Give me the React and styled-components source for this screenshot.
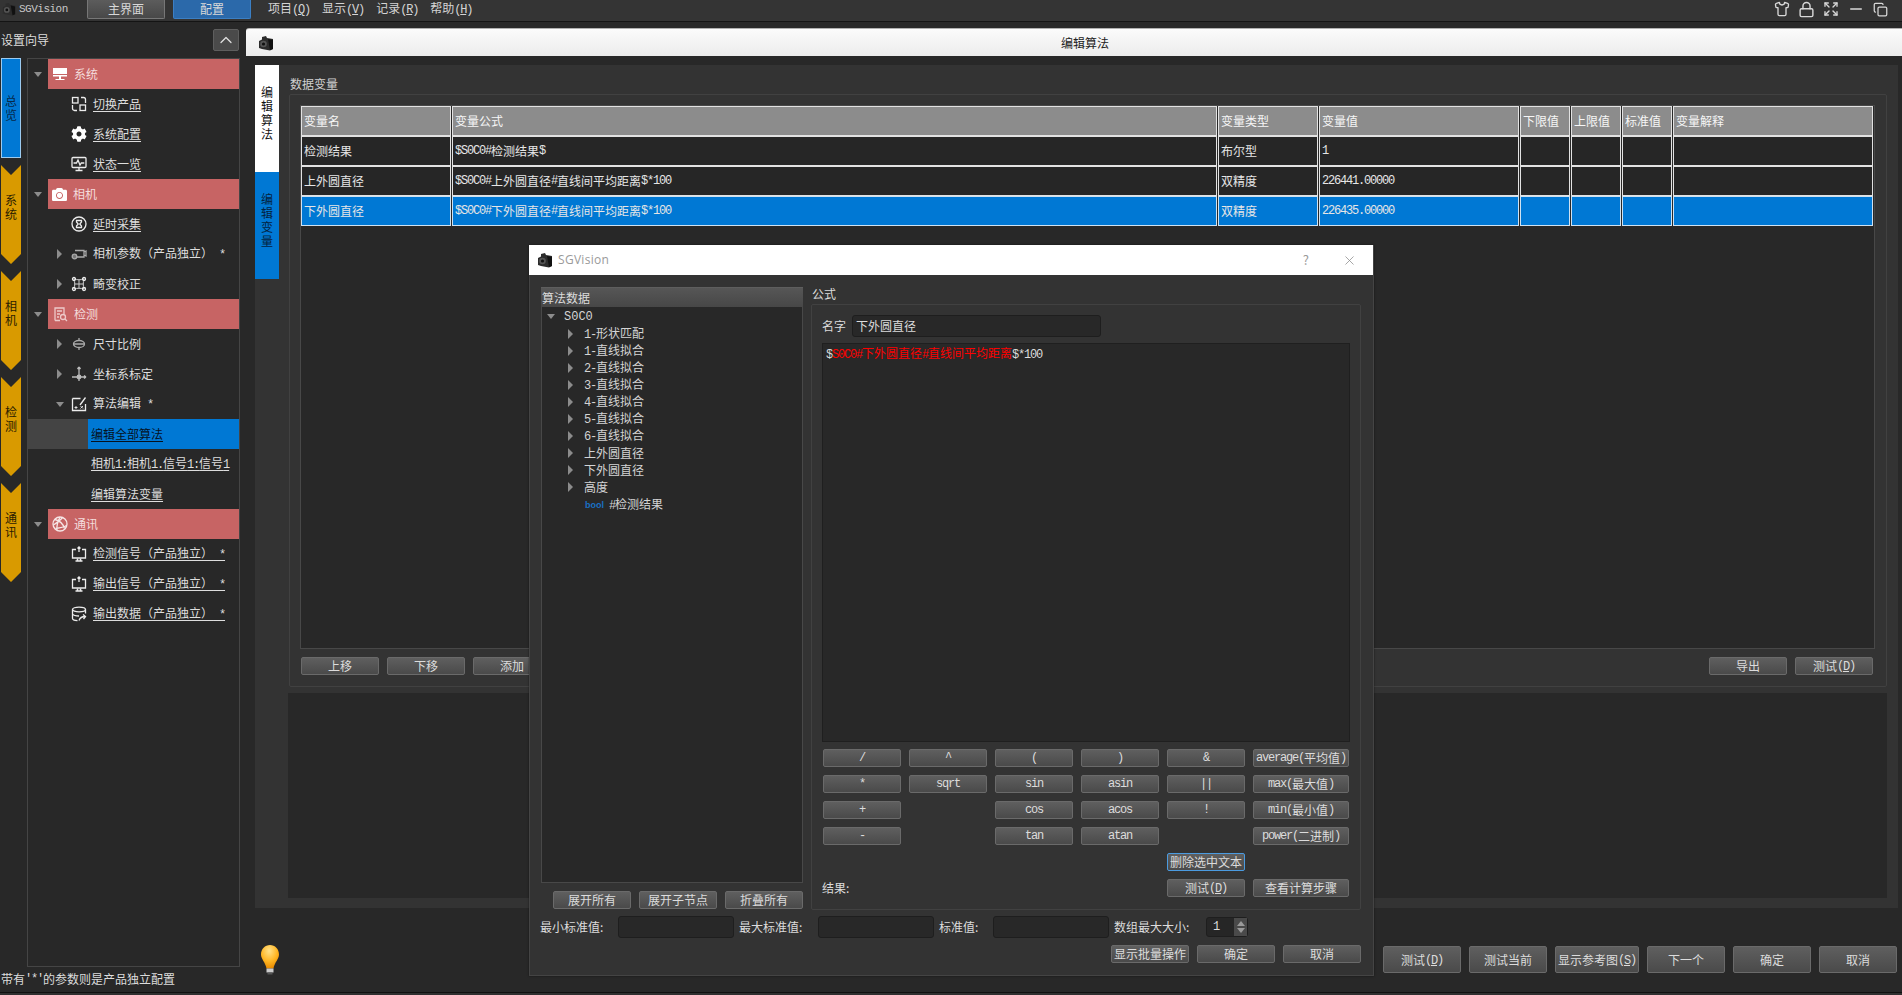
import React from "react";
import styled, { createGlobalStyle } from "styled-components";
import { FaCog, FaCamera } from "react-icons/fa";
import { Shirt, Lock, Expand, Minus, Copy, X, ChevronUp } from "lucide-react";

const GlobalStyle = createGlobalStyle`
  html, body {
    margin: 0;
    padding: 0;
    background: #282828;
  }
  * {
    box-sizing: border-box;
  }
`;

const CJK = `"Noto Sans CJK SC", sans-serif`;

const Page = styled.div`
  position: relative;
  width: 1902px;
  height: 995px;
  overflow: hidden;
  display: flex;
  flex-direction: column;
  background: #282828;
  color: #dcdcdc;
  font-family: ${CJK};
  font-size: 12px;
  line-height: 14px;
`;

const Latin = styled.span`
  font-family: "Liberation Mono", monospace;
  font-size: 12px;
  letter-spacing: -1.2px;
`;

// splits a label so ascii gets the half width face
const Txt = ({ children }) =>
  String(children)
    .split(/([\x21-\x7e ]+)/)
    .map((part, i) =>
      i % 2 ? <Latin key={i}>{part}</Latin> : part
    );

const Key = ({ label, k }) => (
  <>
    {label}
    <Latin>(</Latin>
    <u>
      <Latin>{k}</Latin>
    </u>
    <Latin>)</Latin>
  </>
);

/* top bar */
const TopBar = styled.div`
  flex: none;
  height: 22px;
  display: flex;
  background: #343434;
  border-bottom: 1px solid #141414;
`;

const Brand = styled.div`
  width: 87px;
  display: flex;
  align-items: center;
  gap: 3px;
  padding: 0 0 3px 2px;
`;

const BrandName = styled.span`
  font-family: "Liberation Mono", monospace;
  font-size: 11px;
  letter-spacing: -0.5px;
  color: #c8c8c8;
`;

const ModeTab = styled.div`
  width: 78px;
  height: 19px;
  margin-right: 8px;
  display: flex;
  align-items: center;
  justify-content: center;
  border: 1px solid ${(p) => (p.$active ? "#3b7fc4" : "#777")};
  border-top: 0;
  border-radius: 0 0 2px 2px;
  background: ${(p) =>
    p.$active ? "#2b69aa" : "linear-gradient(#5c5c5c, #484848)"};
  color: #d8d8d8;
`;

const MenuList = styled.div`
  display: flex;
  gap: 12px;
  margin-left: 9px;
  height: 18px;
  align-items: center;
  color: #d4d4d4;
`;

const WindowButtons = styled.div`
  margin-left: auto;
  margin-right: -12px;
  display: flex;
  align-items: center;
  gap: 8px;
  height: 18px;
  color: #d8d8d8;
`;

const CloseIcon = styled(X)`
  margin-left: 4px;
`;

/* body */
const Body = styled.div`
  flex: none;
  height: 970px;
  display: flex;
`;

const Sidebar = styled.div`
  flex: none;
  width: 246px;
  display: flex;
  flex-direction: column;
`;

const SideHead = styled.div`
  height: 29px;
  margin-top: 7px;
  padding: 0 7px 0 1px;
  display: flex;
  align-items: flex-start;
  justify-content: space-between;
`;

const SideTitle = styled.span`
  margin-top: 4px;
`;

const CollapseButton = styled.div`
  width: 26px;
  height: 22px;
  display: flex;
  align-items: center;
  justify-content: center;
  background: #4a4a4a;
  border: 1px solid #5e5e5e;
  border-radius: 2px;
  color: #e0e0e0;
`;

const SideColumns = styled.div`
  height: 909px;
  display: flex;
  padding-left: 1px;
  gap: 6px;
`;

const Rail = styled.div`
  width: 20px;
  display: flex;
  flex-direction: column;
  gap: 7px;
`;

const RailOverview = styled.div`
  height: 100px;
  display: flex;
  align-items: center;
  justify-content: center;
  text-align: center;
  background: #0078d4;
  border: 1px solid #9ccbf0;
  color: #06294a;
`;

const RailChevron = styled.div`
  height: 99px;
  padding-top: 28px;
  text-align: center;
  background: #d99a00;
  color: #2c2000;
  clip-path: polygon(
    0 0,
    50% 10px,
    100% 0,
    100% calc(100% - 10px),
    50% 100%,
    0 calc(100% - 10px)
  );
`;

const Tree = styled.div`
  width: 213px;
  border: 1px solid #454545;
  background: #282828;
`;

const CategoryRow = styled.div`
  height: 30px;
  display: flex;
  align-items: center;
`;

const ArrowSlot = styled.div`
  flex: none;
  width: ${(p) => p.$w}px;
  display: flex;
  justify-content: center;
`;

const CategoryBar = styled.div`
  flex: 1;
  height: 30px;
  display: flex;
  align-items: center;
  gap: 6px;
  padding-left: 4px;
  background: #c76464;
  color: #f4dcdc;
`;

const ItemRow = styled.div`
  height: 30px;
  display: flex;
  align-items: center;
  padding-left: 20px;
`;

const ItemLabel = styled.span`
  margin-left: 6px;
  white-space: pre;
  color: #dedede;
  text-decoration: ${(p) => (p.$link ? "underline" : "none")};
  text-underline-offset: 2px;
`;

const LeafRow = styled.div`
  height: 30px;
  display: flex;
  align-items: center;
  padding-left: ${(p) => (p.$selected ? 0 : 63)}px;
  background: ${(p) => (p.$selected ? "#444" : "transparent")};
`;

const LeafFill = styled.div`
  margin-left: 60px;
  flex: 1;
  height: 30px;
  display: flex;
  align-items: center;
  padding-left: 3px;
  background: #0078d4;
`;

const LeafLink = styled.span`
  text-decoration: underline;
  text-underline-offset: 2px;
  color: ${(p) => (p.$selected ? "#06121f" : "#dedede")};
`;

const Triangle = styled.span`
  display: block;
  width: 0;
  height: 0;
  border-style: solid;
  ${(p) =>
    p.$open
      ? `border-width: 5px 4.5px 0 4.5px; border-color: #8c8c8c transparent transparent transparent;`
      : `border-width: 5px 0 5px 5px; border-color: transparent transparent transparent #8c8c8c;`}
`;

const IconBox = styled.svg`
  flex: none;
  width: 16px;
  height: 16px;
  fill: none;
  stroke: currentColor;
  stroke-width: 1.3;
  color: #ececec;
`;

const StatusLine = styled.div`
  margin-top: 1px;
  padding-left: 1px;
  height: 22px;
  display: flex;
  align-items: center;
`;

const Main = styled.div`
  flex: 1;
  display: flex;
  flex-direction: column;
  padding-top: 6px;
`;

const PageHeader = styled.div`
  height: 28px;
  display: flex;
  align-items: center;
  padding-left: 12px;
  background: linear-gradient(#fbfbfb, #ececec);
  border-top: 1px solid #b0b0b0;
  border-radius: 3px 0 0 0;
  color: #222;
`;

const PageTitle = styled.div`
  flex: 1;
  text-align: center;
  padding-right: 6px;
`;

const Panel = styled.div`
  height: 843px;
  margin: 9px 4px 0 9px;
  display: flex;
  background: #333;
`;

const SideTabs = styled.div`
  flex: none;
  width: 24px;
  display: flex;
  flex-direction: column;
`;

const SideTab = styled.div`
  height: 107px;
  padding-top: 20px;
  text-align: center;
  background: ${(p) => (p.$active ? "#fff" : "#0078d4")};
  color: ${(p) => (p.$active ? "#111" : "#04233f")};
`;

const PanelContent = styled.div`
  flex: 1;
  min-width: 0;
  padding: 13px 11px 10px 10px;
  display: flex;
  flex-direction: column;
`;

const GroupLabel = styled.div`
  height: 16px;
  margin-top: -1px;
  padding-left: 1px;
  margin-bottom: 1px;
  color: #d0d0d0;
`;

const GroupBox = styled.div`
  height: 593px;
  padding: 10px 11px 0 10px;
  border: 1px solid #414141;
  border-radius: 2px;
`;

const TableWrap = styled.div`
  height: 544px;
  border: 1px solid #484848;
  background: #282828;
`;

const TableRow = styled.div`
  display: grid;
  grid-template-columns: 150px 765px 100px 200px 50px 50px 50px 200px;
  column-gap: 1px;
`;

const Cell = styled.div`
  height: 30px;
  display: flex;
  align-items: center;
  padding-left: 2px;
  white-space: nowrap;
  overflow: hidden;
  border: 1px solid ${(p) => (p.$selected ? "#cfe2f2" : "#e2e2e2")};
  background: ${(p) =>
    p.$head ? "#8c8c8c" : p.$selected ? "#0078d4" : "#262626"};
  color: ${(p) => (p.$head ? "#f6f6f6" : "#e6e6e6")};
`;

const ButtonRow = styled.div`
  margin-top: 8px;
  padding: 0 2px 0 1px;
  display: flex;
  justify-content: space-between;
`;

const ButtonGroup = styled.div`
  display: flex;
  gap: 8px;
`;

const Btn = styled.div`
  flex: none;
  width: ${(p) => p.$w || 78}px;
  height: ${(p) => p.$h || 18}px;
  display: flex;
  align-items: center;
  justify-content: center;
  white-space: nowrap;
  border: 1px solid ${(p) => (p.$focus ? "#4b9be0" : "#6a6a6a")};
  border-radius: 2px;
  background: linear-gradient(#5f5f5f, #4a4a4a);
  color: #dcdcdc;
`;

const LowerPane = styled.div`
  flex: 1;
  margin-top: 6px;
  margin-left: -1px;
  background: #282828;
`;

const Footer = styled.div`
  margin-top: 37px;
  padding: 0 5px 0 14px;
  display: flex;
  justify-content: space-between;
`;

const FooterButtons = styled.div`
  display: flex;
  gap: 8px;
  padding-top: 1px;
`;

const BulbArt = styled.svg`
  width: 20px;
  height: 30px;
`;

const BottomStrip = styled.div`
  flex: 1;
  border-top: 1px solid #111;
  background: #303030;
`;

/* dialog */
const Dialog = styled.div`
  position: absolute;
  left: 529px;
  top: 245px;
  width: 845px;
  height: 731px;
  display: flex;
  flex-direction: column;
  background: #333;
  border: 1px solid #444;
  border-top: 0;
  box-shadow: 0 0 2px rgba(0, 0, 0, 0.5);
`;

const DialogTitle = styled.div`
  flex: none;
  height: 30px;
  margin: 0 0 0 -1px;
  display: flex;
  align-items: center;
  padding: 0 16px 0 8px;
  background: #fff;
`;

const DialogName = styled.span`
  margin-left: 5px;
  font-family: "Open Sans", sans-serif;
  font-size: 12px;
  letter-spacing: 0.3px;
  color: #9a9a9a;
`;

const HelpMark = styled.span`
  margin-left: auto;
  margin-right: 33px;
  font-size: 13px;
  color: #9a9a9a;
`;

const DialogBody = styled.div`
  flex: 1;
  padding: 12px 12px 0 11px;
  display: flex;
  flex-direction: column;
`;

const DialogMain = styled.div`
  height: 623px;
  display: flex;
  gap: 8px;
`;

const DataColumn = styled.div`
  width: 262px;
  display: flex;
  flex-direction: column;
`;

const DataHead = styled.div`
  height: 20px;
  display: flex;
  align-items: center;
  padding-left: 1px;
  background: linear-gradient(#565656, #474747);
  border-top: 1px solid #5e5e5e;
`;

const DataTree = styled.div`
  height: 576px;
  padding-top: 1px;
  border: 1px solid #484848;
  border-top: 0;
  background: #282828;
`;

const DataNode = styled.div`
  height: 17px;
  display: flex;
  align-items: center;
  padding-left: ${(p) => p.$indent}px;
  gap: ${(p) => p.$gap}px;
  color: #d4d4d4;
`;

const LeafNode = styled(DataNode)`
  margin-top: 1px;
`;

const TypeTag = styled.span`
  font-family: "Liberation Sans Narrow", "Liberation Sans", sans-serif;
  font-size: 9px;
  font-weight: 700;
  color: #1a70c4;
`;

const RootName = styled.span`
  font-family: "Liberation Mono", monospace;
  font-size: 12px;
`;

const DataButtons = styled.div`
  margin-top: 8px;
  display: flex;
  justify-content: flex-end;
  gap: 8px;
`;

const FormulaColumn = styled.div`
  width: 550px;
  display: flex;
  flex-direction: column;
`;

const FormulaLabel = styled.div`
  height: 17px;
  padding-left: 1px;
`;

const FormulaBox = styled.div`
  height: 606px;
  padding: 10px;
  border: 1px solid #414141;
  border-radius: 2px;
`;

const NameRow = styled.div`
  height: 22px;
  display: flex;
  align-items: center;
  gap: 6px;
`;

const Field = styled.div`
  flex: none;
  width: ${(p) => p.$w}px;
  height: 22px;
  display: flex;
  align-items: center;
  padding-left: 3px;
  background: #282828;
  border: 1px solid #1e1e1e;
  border-radius: 3px;
`;

const FormulaArea = styled.div`
  width: 528px;
  height: 399px;
  margin-top: 6px;
  padding: 2px 3px;
  background: #282828;
  border: 1px solid #1f1f1f;
  white-space: pre;
`;

const RedText = styled.span`
  color: #ff0000;
`;

const CalcGrid = styled.div`
  margin: 7px 0 0 1px;
  display: grid;
  grid-template-columns: repeat(5, 78px) 96px;
  grid-auto-rows: 18px;
  gap: 8px;
`;

const ResultLabel = styled.div`
  grid-column: span 4;
  margin-left: -1px;
  display: flex;
  align-items: center;
`;

const FieldsRow = styled.div`
  margin: 6px 0 0 -1px;
  height: 22px;
  display: flex;
  align-items: center;
`;

const FieldLabel = styled.span`
  flex: none;
  width: ${(p) => p.$w}px;
  margin-left: ${(p) => p.$ml || 0}px;
`;

const Spinner = styled.div`
  width: 42px;
  height: 20px;
  display: flex;
  justify-content: space-between;
  padding-left: 6px;
  align-items: center;
  background: #262626;
  border: 1px solid #1e1e1e;
  border-radius: 3px;
`;

const SpinArrows = styled.div`
  width: 13px;
  height: 18px;
  display: flex;
  flex-direction: column;
  align-items: center;
  justify-content: center;
  gap: 2px;
  background: #4a4a4a;
`;

const SpinArrow = styled.span`
  width: 0;
  height: 0;
  border-style: solid;
  border-width: ${(p) => (p.$up ? "0 4px 5px 4px" : "5px 4px 0 4px")};
  border-color: ${(p) =>
    p.$up
      ? "transparent transparent #9a9a9a transparent"
      : "#9a9a9a transparent transparent transparent"};
`;

const DialogActions = styled.div`
  margin-top: 7px;
  display: flex;
  justify-content: flex-end;
  gap: 8px;
`;

/* drawings */
const Ico = ({ children }) => <IconBox viewBox="0 0 16 16">{children}</IconBox>;

const icons = {
  monitorFill: (
    <g fill="#fff" stroke="none">
      <path d="M1 2h14v6H1zM1 9h14v1.5H1zM7 10.5h2V13H7zM3.5 13h9v1h-9z" />
    </g>
  ),
  swap: (
    <>
      <rect x="1.5" y="1.5" width="5.5" height="5.5" />
      <rect x="9" y="9" width="5.5" height="5.5" />
      <path d="M10 1.5h2.5a2 2 0 0 1 2 2V7M6 14.5H3.5a2 2 0 0 1-2-2V9" />
    </>
  ),
  status: (
    <>
      <rect x="1" y="1.5" width="14" height="10" rx="1" />
      <path d="M2.5 7h3l1.5-3 2 5 1.3-2h3M8 11.5V14M4.5 14.5h7" />
    </>
  ),
  timer: (
    <>
      <circle cx="8" cy="8" r="7" />
      <path d="M5.5 4.5h5v1.5L8.8 8l1.7 2v1.5h-5V10l1.7-2-1.7-2z" />
    </>
  ),
  camParam: (
    <>
      <path d="M4 4.5h9v6.5H6M13 6l2-1v5l-2-1" stroke="#aaa" />
      <circle cx="3.5" cy="10.5" r="2.3" fill="#777" stroke="#aaa" />
    </>
  ),
  distort: (
    <>
      <path d="M3 3c3 1 7 1 10 0M3 13c3-1 7-1 10 0M3 3c1 3 1 7 0 10M13 3c-1 3-1 7 0 10M8 3.5v9M3.5 8h9" stroke="#ccc" strokeWidth="1" />
      <circle cx="3" cy="3" r="1.5" />
      <circle cx="13" cy="3" r="1.5" />
      <circle cx="3" cy="13" r="1.5" />
      <circle cx="13" cy="13" r="1.5" />
    </>
  ),
  doc: (
    <>
      <path d="M3 14.5V2h9v6M3 14.5h5M5 5h5M5 8h3M5 11h2" stroke="#eecaca" />
      <circle cx="11" cy="11" r="2.5" stroke="#eecaca" />
      <path d="M13 13l2 2" stroke="#eecaca" />
    </>
  ),
  scale: (
    <>
      <ellipse cx="8" cy="8" rx="5.500" ry="3.500" stroke="#aaa" />
      <path d="M2.500 8h11M8 2v2.500M8 11.500V14" stroke="#aaa" />
    </>
  ),
  axes: (
    <>
      <path d="M8 1v14M1 11h14M8 1L6.5 3M8 1l1.5 2M15 11l-2-1.5M15 11l-2 1.5" stroke="#bbb" />
      <circle cx="8" cy="11" r="1.8" fill="#bbb" stroke="#bbb" />
    </>
  ),
  algo: (
    <>
      <path d="M1.5 2.5h8M1.5 2.5v12h13V8" />
      <path d="M9 9l5.5-7.5" />
      <path d="M3.5 11.5h3M5 10v3M9.5 10l2.5 2.5M12 10l-2.5 2.5" strokeWidth="0.9" />
    </>
  ),
  globe: (
    <g stroke="#f7e6e6">
      <circle cx="8" cy="8" r="7" />
      <path d="M3 3.5c4 1 8 4 9.5 9M1.5 9c3-2 7-5 9-7.500M5 14c-.5-4 1-9 3-13M3.500 12.500c4-.5 8-1 11-3" />
    </g>
  ),
  signal: (
    <>
      <path d="M5 3.500H1.500v8.500h13V3.500H11" />
      <path d="M8 1v5M6.500 2.500L8 1l1.500 1.500" />
      <path d="M6.500 12.500v2M9.500 12.500v2M4.500 15h7" strokeWidth="1.6" />
    </>
  ),
  database: (
    <>
      <ellipse cx="8" cy="3.500" rx="6.500" ry="2.300" />
      <path d="M1.500 3.500v9c0 1 2 2 5 2.200M14.500 3.500v4M1.500 8c1 1.500 4 2 6.500 2" />
      <path d="M8 14.500c1-3 3-4 6-4M12 8.500l2.500 2-2 2.500" />
    </>
  ),
};

const CameraLogo = ({ size = 16 }) => (
  <svg width={size} height={size} viewBox="0 0 16 16">
    <path d="M1 6l3-1.500V2l4-1 1 2 6 1v10l-3 1.500-8-1.500-3-1z" fill="#2c2c2c" />
    <path d="M10 4l5 1v9l-3 1z" fill="#111" />
    <circle cx="5.500" cy="9" r="3.300" fill="#555" />
    <circle cx="5.500" cy="9" r="1.600" fill="#111" />
  </svg>
);

const Bulb = () => (
  <BulbArt viewBox="0 0 20 30">
    <defs>
      <radialGradient id="bulbGlow" cx="45%" cy="25%" r="75%">
        <stop offset="0" stopColor="#ffe28a" />
        <stop offset="0.6" stopColor="#ffb522" />
        <stop offset="1" stopColor="#e88a00" />
      </radialGradient>
    </defs>
    <path
      d="M10 0c5 0 9 4 9 9.500 0 4.500-4.500 8-5.500 14h-7C5.500 17.500 1 14 1 9.500 1 4 5 0 10 0z"
      fill="url(#bulbGlow)"
    />
    <rect x="6.500" y="23.500" width="7" height="4" fill="#ccc" />
    <rect x="7.500" y="27.500" width="5" height="2" fill="#555" />
  </BulbArt>
);

/* data */
const railItems = ["系统", "相机", "检测", "通讯"];

const sideTree = [
  { type: "cat", label: "系统", icon: "monitorFill" },
  { type: "item", label: "切换产品", icon: "swap", link: true },
  { type: "item", label: "系统配置", gear: true, link: true },
  { type: "item", label: "状态一览", icon: "status", link: true },
  { type: "cat", label: "相机", cam: true },
  { type: "item", label: "延时采集", icon: "timer", link: true },
  { type: "item", label: "相机参数（产品独立） *", icon: "camParam", arrow: "right" },
  { type: "item", label: "畸变校正", icon: "distort", arrow: "right" },
  { type: "cat", label: "检测", icon: "doc" },
  { type: "item", label: "尺寸比例", icon: "scale", arrow: "right" },
  { type: "item", label: "坐标系标定", icon: "axes", arrow: "right" },
  { type: "item", label: "算法编辑 *", icon: "algo", arrow: "down" },
  { type: "leaf", label: "编辑全部算法", selected: true },
  { type: "leaf", label: "相机1:相机1.信号1:信号1" },
  { type: "leaf", label: "编辑算法变量" },
  { type: "cat", label: "通讯", icon: "globe" },
  { type: "item", label: "检测信号（产品独立） *", icon: "signal", link: true },
  { type: "item", label: "输出信号（产品独立） *", icon: "signal", link: true },
  { type: "item", label: "输出数据（产品独立） *", icon: "database", link: true },
];

const columns = ["变量名", "变量公式", "变量类型", "变量值", "下限值", "上限值", "标准值", "变量解释"];

const rows = [
  ["检测结果", "$S0C0#检测结果$", "布尔型", "1"],
  ["上外圆直径", "$S0C0#上外圆直径#直线间平均距离$*100", "双精度", "226441.00000"],
  ["下外圆直径", "$S0C0#下外圆直径#直线间平均距离$*100", "双精度", "226435.00000"],
];

const dataNodes = [
  "1-形状匹配",
  "1-直线拟合",
  "2-直线拟合",
  "3-直线拟合",
  "4-直线拟合",
  "5-直线拟合",
  "6-直线拟合",
  "上外圆直径",
  "下外圆直径",
  "高度",
];

const calcRows = [
  ["/", "^", "(", ")", "&", "average(平均值)"],
  ["*", "sqrt", "sin", "asin", "||", "max(最大值)"],
  ["+", "", "cos", "acos", "!", "min(最小值)"],
  ["-", "", "tan", "atan", "", "power(二进制)"],
];

const renderSideRow = (row) => {
  if (row.type === "cat") {
    return (
      <CategoryRow key={row.label}>
        <ArrowSlot $w={20}>
          <Triangle $open />
        </ArrowSlot>
        <CategoryBar>
          {row.cam ? (
            <FaCamera size={15} color="#fff" />
          ) : (
            <Ico>{icons[row.icon]}</Ico>
          )}
          {row.label}
        </CategoryBar>
      </CategoryRow>
    );
  }
  if (row.type === "item") {
    return (
      <ItemRow key={row.label}>
        <ArrowSlot $w={23}>
          {row.arrow && <Triangle $open={row.arrow === "down"} />}
        </ArrowSlot>
        {row.gear ? (
          <FaCog size={16} color="#fff" />
        ) : (
          <Ico>{icons[row.icon]}</Ico>
        )}
        <ItemLabel $link={row.link}>
          <Txt>{row.label}</Txt>
        </ItemLabel>
      </ItemRow>
    );
  }
  if (row.selected) {
    return (
      <LeafRow key={row.label} $selected>
        <LeafFill>
          <LeafLink $selected>{row.label}</LeafLink>
        </LeafFill>
      </LeafRow>
    );
  }
  return (
    <LeafRow key={row.label}>
      <LeafLink>
        <Txt>{row.label}</Txt>
      </LeafLink>
    </LeafRow>
  );
};

const App = () => (
  <Page>
    <GlobalStyle />
    <TopBar>
      <Brand>
        <CameraLogo size={14} />
        <BrandName>SGVision</BrandName>
      </Brand>
      <ModeTab>主界面</ModeTab>
      <ModeTab $active>配置</ModeTab>
      <MenuList>
        <span><Key label="项目" k="Q" /></span>
        <span><Key label="显示" k="V" /></span>
        <span><Key label="记录" k="R" /></span>
        <span><Key label="帮助" k="H" /></span>
      </MenuList>
      <WindowButtons>
        <Shirt size={16} />
        <Lock size={17} />
        <Expand size={16} />
        <Minus size={18} />
        <Copy size={15} />
        <CloseIcon size={14} />
      </WindowButtons>
    </TopBar>

    <Body>
      <Sidebar>
        <SideHead>
          <SideTitle>设置向导</SideTitle>
          <CollapseButton>
            <ChevronUp size={20} strokeWidth={1.5} />
          </CollapseButton>
        </SideHead>
        <SideColumns>
          <Rail>
            <RailOverview>总<br />览</RailOverview>
            {railItems.map((name) => (
              <RailChevron key={name}>
                {name[0]}
                <br />
                {name[1]}
              </RailChevron>
            ))}
          </Rail>
          <Tree>{sideTree.map(renderSideRow)}</Tree>
        </SideColumns>
        <StatusLine>
          <Txt>带有'*'的参数则是产品独立配置</Txt>
        </StatusLine>
      </Sidebar>

      <Main>
        <PageHeader>
          <CameraLogo />
          <PageTitle>编辑算法</PageTitle>
        </PageHeader>
        <Panel>
          <SideTabs>
            <SideTab $active>编<br />辑<br />算<br />法</SideTab>
            <SideTab>编<br />辑<br />变<br />量</SideTab>
          </SideTabs>
          <PanelContent>
            <GroupLabel>数据变量</GroupLabel>
            <GroupBox>
              <TableWrap>
                <TableRow>
                  {columns.map((c) => (
                    <Cell $head key={c}>{c}</Cell>
                  ))}
                </TableRow>
                {rows.map((row, i) => (
                  <TableRow key={row[0]}>
                    {columns.map((c, j) => (
                      <Cell key={c} $selected={i === 2}>
                        {row[j] ? <Txt>{row[j]}</Txt> : null}
                      </Cell>
                    ))}
                  </TableRow>
                ))}
              </TableWrap>
              <ButtonRow>
                <ButtonGroup>
                  <Btn>上移</Btn>
                  <Btn>下移</Btn>
                  <Btn>添加</Btn>
                </ButtonGroup>
                <ButtonGroup>
                  <Btn>导出</Btn>
                  <Btn><Key label="测试" k="D" /></Btn>
                </ButtonGroup>
              </ButtonRow>
            </GroupBox>
            <LowerPane />
          </PanelContent>
        </Panel>
        <Footer>
          <Bulb />
          <FooterButtons>
            <Btn $h={27}><Key label="测试" k="D" /></Btn>
            <Btn $h={27}>测试当前</Btn>
            <Btn $h={27} $w={84}><Key label="显示参考图" k="S" /></Btn>
            <Btn $h={27}>下一个</Btn>
            <Btn $h={27}>确定</Btn>
            <Btn $h={27}>取消</Btn>
          </FooterButtons>
        </Footer>
      </Main>
    </Body>
    <BottomStrip />

    <Dialog>
      <DialogTitle>
        <CameraLogo />
        <DialogName>SGVision</DialogName>
        <HelpMark>?</HelpMark>
        <X size={15} color="#8a8a8a" strokeWidth={1.2} />
      </DialogTitle>
      <DialogBody>
        <DialogMain>
          <DataColumn>
            <DataHead>算法数据</DataHead>
            <DataTree>
              <DataNode $indent={5} $gap={9}>
                <Triangle $open />
                <RootName>S0C0</RootName>
              </DataNode>
              {dataNodes.map((name) => (
                <DataNode key={name} $indent={26} $gap={11}>
                  <Triangle />
                  <span><Txt>{name}</Txt></span>
                </DataNode>
              ))}
              <LeafNode $indent={43} $gap={5}>
                <TypeTag>bool</TypeTag>
                <span><Txt>#检测结果</Txt></span>
              </LeafNode>
            </DataTree>
            <DataButtons>
              <Btn>展开所有</Btn>
              <Btn>展开子节点</Btn>
              <Btn>折叠所有</Btn>
            </DataButtons>
          </DataColumn>
          <FormulaColumn>
            <FormulaLabel>公式</FormulaLabel>
            <FormulaBox>
              <NameRow>
                名字
                <Field $w={249}>下外圆直径</Field>
              </NameRow>
              <FormulaArea>
                <Latin>$</Latin>
                <RedText><Txt>S0C0#下外圆直径#直线间平均距离</Txt></RedText>
                <Latin>$*100</Latin>
              </FormulaArea>
              <CalcGrid>
                {calcRows.flat().map((label, i) =>
                  label ? (
                    <Btn key={i} $w={label.length > 4 ? 96 : 78}>
                      <Txt>{label}</Txt>
                    </Btn>
                  ) : (
                    <span key={i} />
                  )
                )}
                <span />
                <span />
                <span />
                <span />
                <Btn $focus>删除选中文本</Btn>
                <span />
                <ResultLabel>结果:</ResultLabel>
                <Btn><Key label="测试" k="D" /></Btn>
                <Btn $w={96}>查看计算步骤</Btn>
              </CalcGrid>
            </FormulaBox>
          </FormulaColumn>
        </DialogMain>
        <FieldsRow>
          <FieldLabel $w={78}>最小标准值:</FieldLabel>
          <Field $w={116} />
          <FieldLabel $w={79} $ml={5}>最大标准值:</FieldLabel>
          <Field $w={116} />
          <FieldLabel $w={54} $ml={5}>标准值:</FieldLabel>
          <Field $w={116} />
          <FieldLabel $w={92} $ml={5}>数组最大大小:</FieldLabel>
          <Spinner>
            <Latin>1</Latin>
            <SpinArrows>
              <SpinArrow $up />
              <SpinArrow />
            </SpinArrows>
          </Spinner>
        </FieldsRow>
        <DialogActions>
          <Btn>显示批量操作</Btn>
          <Btn>确定</Btn>
          <Btn>取消</Btn>
        </DialogActions>
      </DialogBody>
    </Dialog>
  </Page>
);

export default App;
